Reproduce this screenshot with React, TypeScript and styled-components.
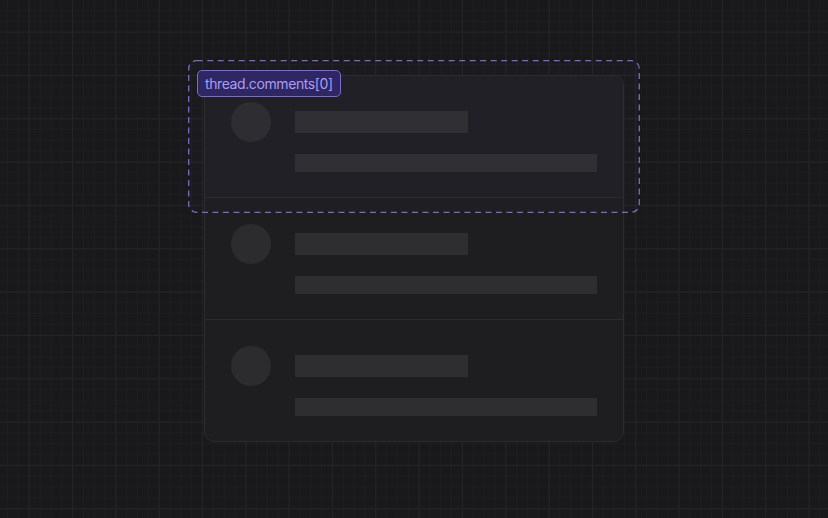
import styled, { createGlobalStyle } from "styled-components";

const GlobalStyle = createGlobalStyle`
    html, body {
        margin: 0;
        padding: 0;
        background: #19191c;
    }

    body {
        font-family: "Inter", "Noto Sans", sans-serif;
    }
`;

const comments = [0, 1, 2];

function App() {
    return (
        <>
            <GlobalStyle />
            <Canvas>
                <Thread>
                    {comments.map((id) => (
                        <Comment key={id} $selected={id === 0}>
                            <Avatar />
                            <Lines>
                                <TitleBar />
                                <BodyBar />
                            </Lines>
                            {id === 0 && (
                                <Selection>
                                    <svg width="100%" height="100%">
                                        <rect
                                            x="0.7"
                                            y="0.7"
                                            width="calc(100% - 1.4px)"
                                            height="calc(100% - 1.4px)"
                                            rx="8"
                                            fill="rgba(124, 106, 214, 0.02)"
                                            stroke="#7a6bc2"
                                            strokeWidth="1.3"
                                            strokeDasharray="6 4.5"
                                        />
                                    </svg>
                                    <PathLabel>thread.comments[0]</PathLabel>
                                </Selection>
                            )}
                        </Comment>
                    ))}
                </Thread>
            </Canvas>
        </>
    );
}

const Canvas = styled.div`
    width: 828px;
    height: 518px;
    box-sizing: border-box;
    padding: 75px 0 0 204px;
    overflow: hidden;
    background-color: #19191c;
    background-image:
        linear-gradient(to right, #242427 1px, transparent 1px),
        linear-gradient(to bottom, #242427 1px, transparent 1px),
        linear-gradient(to right, #1e1e21 1px, transparent 1px),
        linear-gradient(to bottom, #1e1e21 1px, transparent 1px);
    background-size:
        43.333px 43.333px,
        43.333px 43.333px,
        10.833px 10.833px,
        10.833px 10.833px;
    background-position:
        28.7px 31.7px,
        28.7px 31.7px,
        7.1px 9.9px,
        7.1px 9.9px;
`;

const Thread = styled.div`
    width: 420px;
    box-sizing: border-box;
    border: 1px solid #2c2c2f;
    border-radius: 10px;
    background: #1e1e20;
    display: flex;
    flex-direction: column;
`;

const Comment = styled.div<{ $selected: boolean }>`
    position: relative;
    height: 121px;
    box-sizing: border-box;
    padding: 26px 26px 25px 26px;
    display: flex;
    gap: 24px;
    background: ${({ $selected }) => ($selected ? "#211f24" : "transparent")};
    border-radius: ${({ $selected }) => ($selected ? "9px 9px 0 0" : "0")};

    & + & {
        height: 122px;
        border-top: 1px solid #2c2c2f;
    }

    &:last-child {
        border-radius: 0 0 9px 9px;
    }
`;

const Avatar = styled.div`
    width: 40px;
    height: 40px;
    flex-shrink: 0;
    border-radius: 50%;
    background: #2c2c2f;
`;

const Lines = styled.div`
    flex: 1;
    display: flex;
    flex-direction: column;
    padding-top: 9px;
    gap: 21px;
`;

const TitleBar = styled.div`
    width: 173px;
    height: 22px;
    background: #2e2e31;
`;

const BodyBar = styled.div`
    height: 18px;
    background: #2e2e31;
`;

const Selection = styled.div`
    position: absolute;
    top: -16px;
    left: -17px;
    right: -17px;
    bottom: -16px;
    pointer-events: none;

    svg {
        display: block;
        overflow: visible;
    }
`;

const PathLabel = styled.div`
    position: absolute;
    top: 10px;
    left: 9px;
    height: 27px;
    box-sizing: border-box;
    padding: 0 7px;
    display: flex;
    align-items: center;
    border: 1px solid #7b69d6;
    border-radius: 5px;
    background: #2f2664;
    color: #ab9cf4;
    font-family: "Inter", "Noto Sans", sans-serif;
    font-size: 14px;
    letter-spacing: -0.4px;
    white-space: nowrap;
`;

export default App;
